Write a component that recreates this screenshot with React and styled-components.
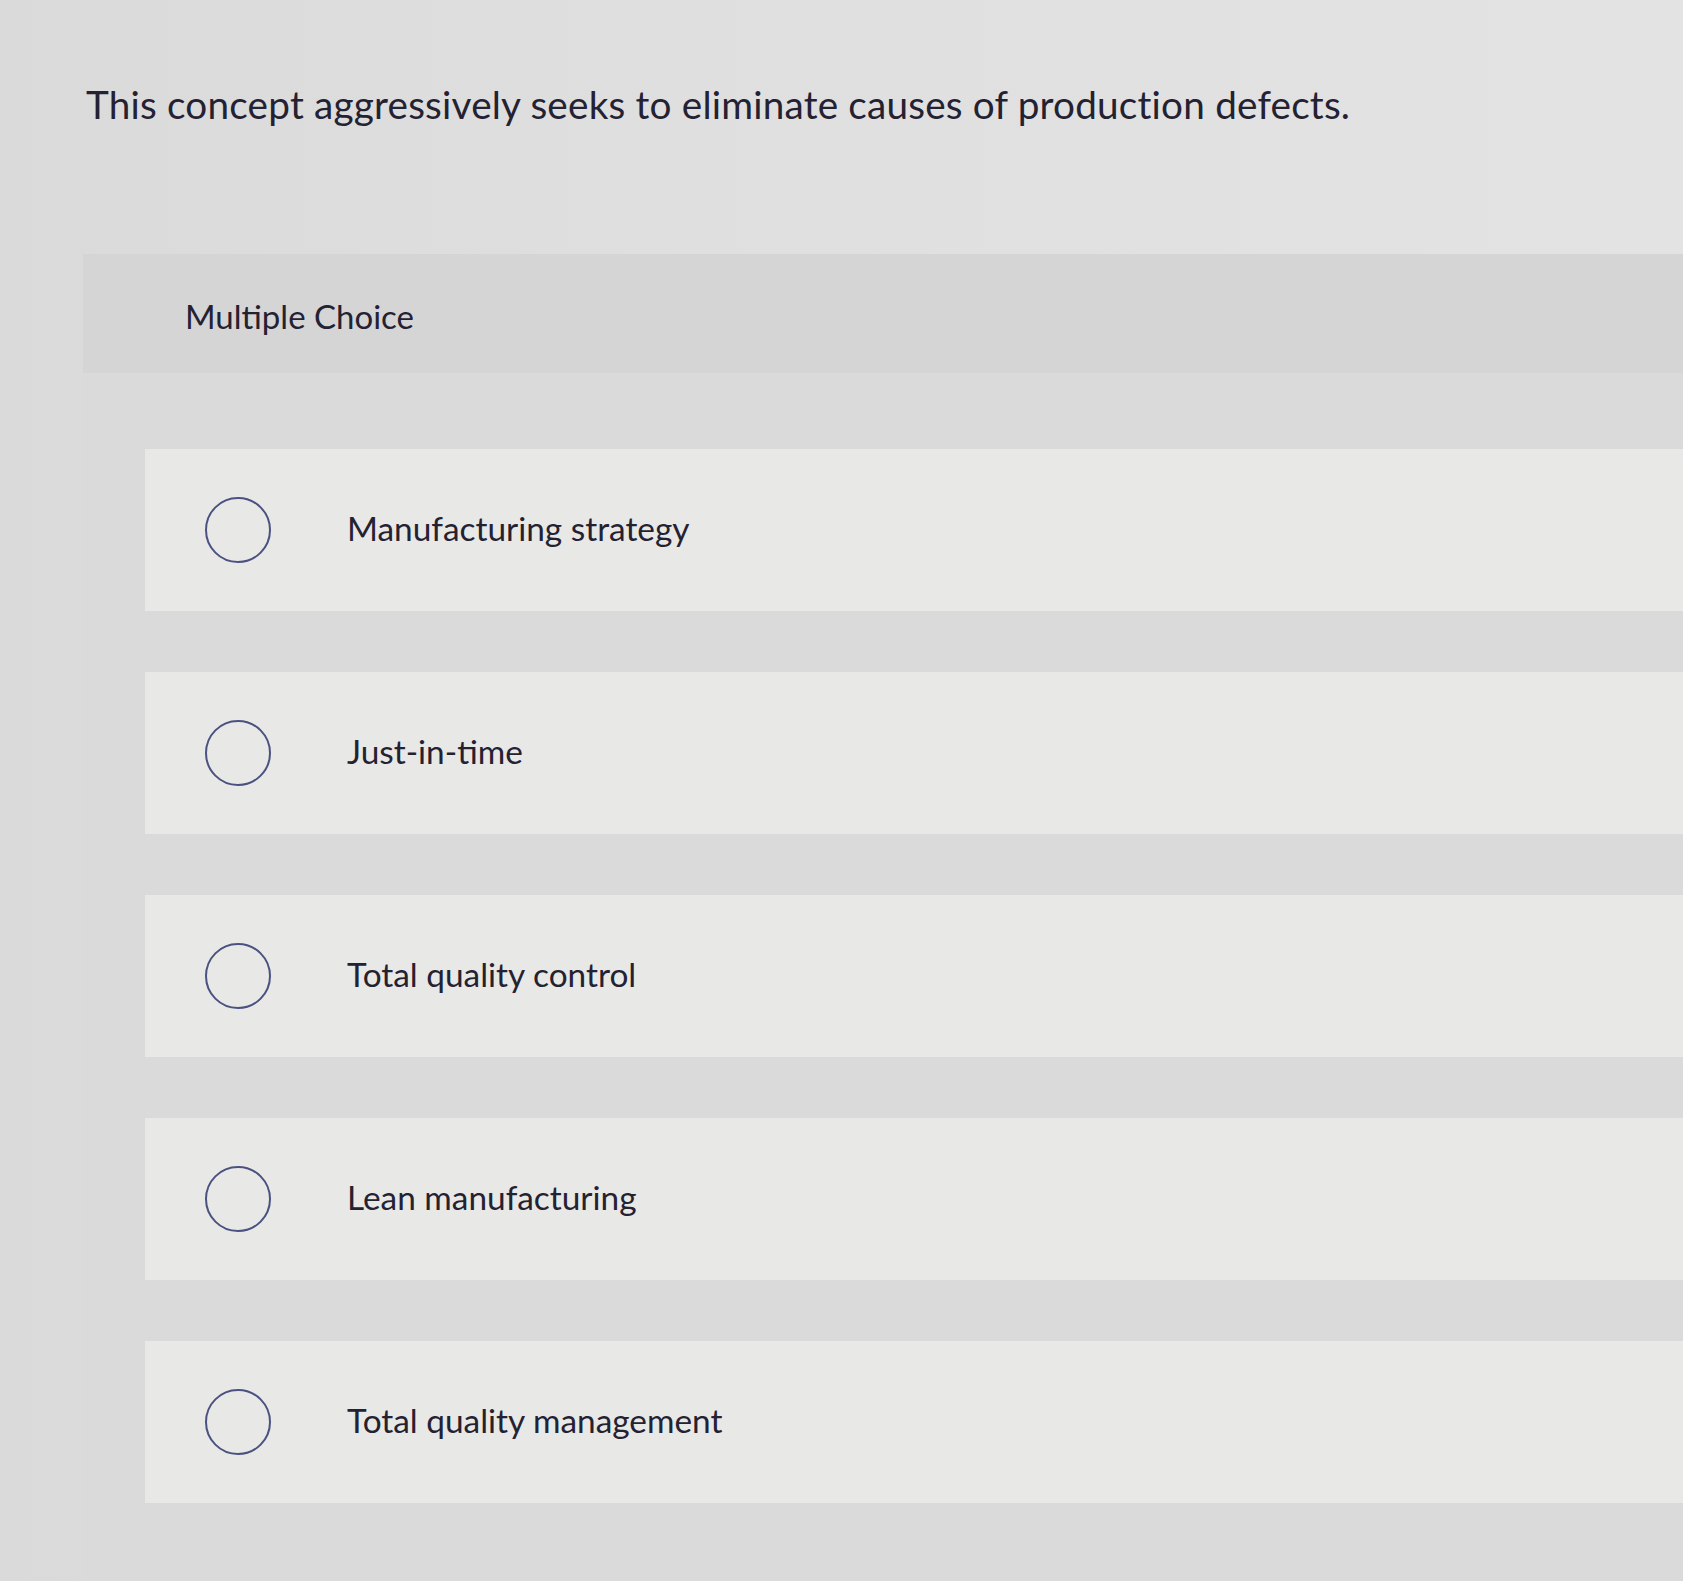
import React from "react";
import styled, { createGlobalStyle } from "styled-components";

const Global = createGlobalStyle`
  html, body {
    margin: 0;
    padding: 0;
    width: 1683px;
    height: 1581px;
    overflow: hidden;
    background: #dedede;
  }
  * { box-sizing: border-box; }
`;

const Page = styled.div`
  width: 1683px;
  height: 1581px;
  overflow: hidden;
  background: linear-gradient(90deg, #dadada 0%, #dfdfdf 40%, #e3e3e3 100%);
  font-family: "Lato", "Liberation Sans", sans-serif;
  color: #242232;
  padding-top: 81px;
`;

const Title = styled.h1`
  margin: 0 0 0 86px;
  font-size: 38.7px;
  line-height: 46px;
  font-weight: 400;
  letter-spacing: 0.2px;
  white-space: nowrap;
`;

const Panel = styled.section`
  margin: 127px 0 0 83px;
  width: 1700px;
  background: #dadada;
`;

const PanelHeader = styled.div`
  height: 119px;
  display: flex;
  align-items: center;
  padding: 4px 0 0 102px;
  background: #d5d5d5;
  font-size: 33px;
`;

const Options = styled.div`
  display: flex;
  flex-direction: column;
  gap: 61px;
  padding: 76px 0 120px 62px;
`;

const Option = styled.label`
  height: 162px;
  display: flex;
  align-items: center;
  padding-left: 60px;
  gap: 76px;
  background: #e8e8e6;
  cursor: pointer;
`;

const Radio = styled.span`
  width: 66px;
  height: 66px;
  flex: none;
  border-radius: 50%;
  border: 2.5px solid #4b5180;
`;

const OptionText = styled.span`
  font-size: 33.4px;
  line-height: 1;
  padding-bottom: 2px;
`;

const options = [
  "Manufacturing strategy",
  "Just-in-time",
  "Total quality control",
  "Lean manufacturing",
  "Total quality management",
];

export default function App() {
  return (
    <Page>
      <Global />
      <Title>This concept aggressively seeks to eliminate causes of production defects.</Title>
      <Panel>
        <PanelHeader>Multiple Choice</PanelHeader>
        <Options>
          {options.map((o) => (
            <Option key={o}>
              <Radio />
              <OptionText>{o}</OptionText>
            </Option>
          ))}
        </Options>
      </Panel>
    </Page>
  );
}
